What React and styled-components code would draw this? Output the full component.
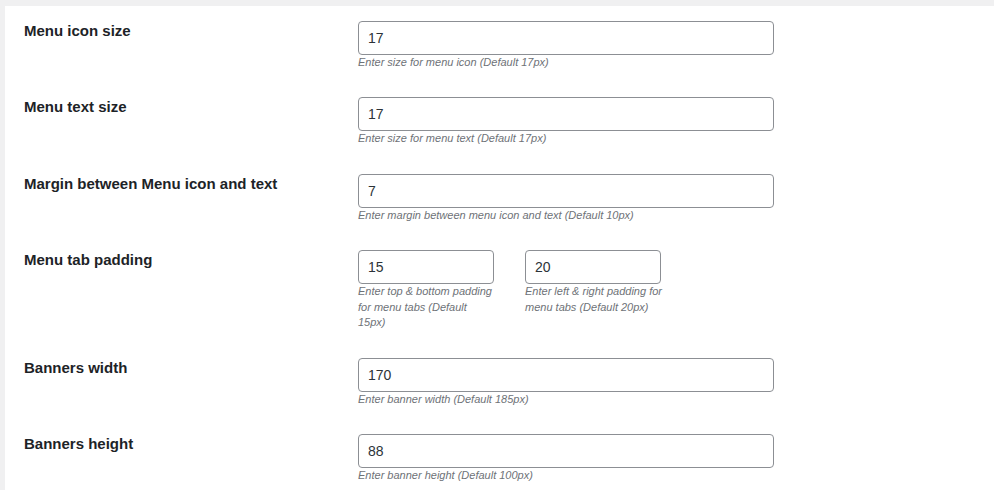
import React from 'react'
import styled, { createGlobalStyle } from 'styled-components'

const GlobalStyle = createGlobalStyle`
  html, body {
    margin: 0;
    padding: 0;
    background: #f0f0f1;
  }
  body {
    font-family: "Liberation Sans", Arial, sans-serif;
    color: #1d2327;
  }
`

const Page = styled.div`
  padding: 6px 0 0 5px;
  min-height: 490px;
  box-sizing: border-box;
`

const Panel = styled.section`
  background: #fff;
  padding: 2px 0 0 19px;
  min-height: 484px;
  box-sizing: border-box;
`

const Row = styled.div`
  display: grid;
  grid-template-columns: 334px 1fr;
  padding: 13px 0 13.5px;
`

const Label = styled.div`
  font-size: 15px;
  font-weight: 700;
  line-height: 20px;
`

const Field = styled.div`
  display: flex;
  gap: 29px;
`

const Cell = styled.div`
  width: ${p => (p.$small ? '138px' : '416px')};
`

const Input = styled.input`
  display: block;
  box-sizing: border-box;
  width: ${p => (p.$small ? '136px' : '416px')};
  height: 34px;
  padding: 0 9px;
  margin: 0;
  border: 1px solid #8c8f94;
  border-radius: 4px;
  background: #fff;
  font-family: "Liberation Sans", Arial, sans-serif;
  font-size: 14px;
  color: #2c3338;
  outline: none;
`

const Description = styled.p`
  margin: 0;
  font-size: 11px;
  line-height: 15.8px;
  font-style: italic;
  color: #6e7277;
`

const rows = [
  { label: 'Menu icon size', fields: [{ value: '17', hint: 'Enter size for menu icon (Default 17px)' }] },
  { label: 'Menu text size', fields: [{ value: '17', hint: 'Enter size for menu text (Default 17px)' }] },
  { label: 'Margin between Menu icon and text', fields: [{ value: '7', hint: 'Enter margin between menu icon and text (Default 10px)' }] },
  {
    label: 'Menu tab padding',
    small: true,
    fields: [
      { value: '15', hint: 'Enter top & bottom padding for menu tabs (Default 15px)' },
      { value: '20', hint: 'Enter left & right padding for menu tabs (Default 20px)' },
    ],
  },
  { label: 'Banners width', fields: [{ value: '170', hint: 'Enter banner width (Default 185px)' }] },
  { label: 'Banners height', fields: [{ value: '88', hint: 'Enter banner height (Default 100px)' }] },
]

const App = () => {
  return (
    <Page>
      <GlobalStyle />
      <Panel>
        {rows.map(row => (
          <Row key={row.label}>
            <Label>{row.label}</Label>
            <Field>
              {row.fields.map((f, i) => (
                <Cell key={i} $small={row.small}>
                  <Input type="text" defaultValue={f.value} $small={row.small} />
                  <Description>{f.hint}</Description>
                </Cell>
              ))}
            </Field>
          </Row>
        ))}
      </Panel>
    </Page>
  )
}

export default App
